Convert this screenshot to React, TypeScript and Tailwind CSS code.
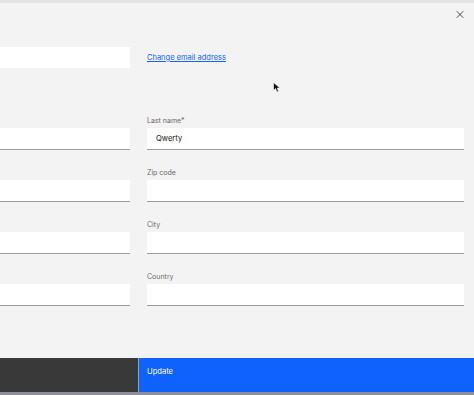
import { X } from "lucide-react";

type Field = {
  label: string;
  value?: string;
};

const fields: Field[] = [
  { label: "Last name*", value: "Qwerty" },
  { label: "Zip code" },
  { label: "City" },
  { label: "Country" },
];

export default function App() {
  return (
    <div className="relative flex h-[395px] w-[474px] flex-col overflow-hidden bg-[#f3f3f3] font-['Inter',sans-serif] text-[#161616]">
      <div className="h-[3px] shrink-0 bg-[#e2e2e2]" />

      <div className="flex h-[22px] shrink-0 items-center justify-end pr-[8px]">
        <button type="button" className="flex h-[12px] w-[12px] items-center justify-center text-[#262626]">
          <X size={13} strokeWidth={1.6} />
        </button>
      </div>

      <div className="mt-[22px] grid grid-cols-[130px_317px] gap-x-[17px]">
        <div className="h-[21px] bg-white" />
        <div className="flex items-center">
          <a href="#" className="text-[7.5px] leading-none text-[#0f62fe] underline">
            Change email address
          </a>
        </div>
      </div>

      <div className="mt-[47px] flex flex-col gap-[17px]">
        {fields.map((field) => (
          <div key={field.label} className="grid grid-cols-[130px_317px] gap-x-[17px]">
            <div className="flex flex-col justify-end">
              <div className="h-[22px] border-b border-[#9a9a9a] bg-white" />
            </div>
            <div className="flex flex-col">
              <label className="h-[13px] text-[7px] leading-[12px] text-[#6a6a6a]">{field.label}</label>
              <div className="flex h-[22px] items-center border-b border-[#9a9a9a] bg-white pl-[9px] text-[7.6px]">
                {field.value}
              </div>
            </div>
          </div>
        ))}
      </div>

      <div className="flex-1" />

      <div className="flex h-[34px] shrink-0">
        <button type="button" className="w-[138px] bg-[#393939]" />
        <div className="w-px bg-[#9aa0aa]" />
        <button type="button" className="flex flex-1 items-start bg-[#0f62fe] pl-[8px] pt-[8px] text-left text-[7.6px] text-white">
          Update
        </button>
      </div>
      <div className="h-[3px] shrink-0 bg-[#8f8f99]" />

      <svg className="absolute left-[273px] top-[82px]" width="8" height="11" viewBox="0 0 8 11">
        <path d="M0.5 0.5 L0.5 8.5 L2.5 6.5 L4 10 L5.5 9.3 L4.2 6 L7 6 Z" fill="#111" stroke="#fff" strokeWidth="0.6" />
      </svg>
    </div>
  );
}
